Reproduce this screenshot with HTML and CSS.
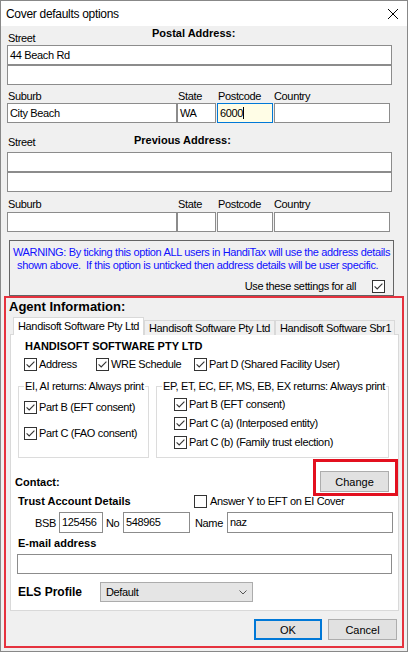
FILE: index.html
```html
<!DOCTYPE html>
<html lang="en">
<head>
    <meta charset="UTF-8">
    <title>Cover defaults options</title>
    <link rel="stylesheet" href="styles.css">
</head>
<body>
    <div class="window">
        <div class="titlebar">
            <span>Cover defaults options</span>
            <svg class="close" width="10" height="10" viewBox="0 0 10 10"><path d="M0 0L10 10M10 0L0 10" stroke="#000" stroke-width="1"/></svg>
        </div>

        <div class="content">
            <!-- Postal address -->
            <div class="addr-head postal">
                <span class="lbl">Street</span>
                <h3>Postal Address:</h3>
            </div>
            <div class="field full">44 Beach Rd</div>
            <div class="field full"></div>
            <div class="addr-grid">
                <span class="lbl">Suburb</span>
                <span class="lbl">State</span>
                <span class="lbl">Postcode</span>
                <span class="lbl country">Country</span>
                <div class="field">City Beach</div>
                <div class="field state">WA</div>
                <div class="field postcode focus">6000<span class="caret"></span></div>
                <div class="field"></div>
            </div>

            <!-- Previous address -->
            <div class="addr-head prev">
                <span class="lbl">Street</span>
                <h3>Previous Address:</h3>
            </div>
            <div class="field full"></div>
            <div class="field full"></div>
            <div class="addr-grid tall">
                <span class="lbl">Suburb</span>
                <span class="lbl">State</span>
                <span class="lbl">Postcode</span>
                <span class="lbl country">Country</span>
                <div class="field"></div>
                <div class="field state"></div>
                <div class="field postcode"></div>
                <div class="field"></div>
            </div>

            <div class="warning">
                <span class="line">WARNING: By ticking this option ALL users in HandiTax will use the address details</span>
                <span class="line second">shown above.&nbsp; If this option is unticked then address details will be user specific.</span>
                <div class="use-all">
                    <span>Use these settings for all</span>
                    <svg class="cb" viewBox="0 0 13 13"><rect x="0.5" y="0.5" width="12" height="12" fill="#fff" stroke="#333"/><path d="M2.6 6.4L5.2 9L10.4 3.6" fill="none" stroke="#333" stroke-width="1.1"/></svg>
                </div>
            </div>
        </div>

        <!-- Agent information -->
        <div class="agent">
            <h2>Agent Information:</h2>
            <div class="tabs">
                <div class="tab active">Handisoft Software Pty Ltd</div>
                <div class="tab">Handisoft Software Pty Ltd</div>
                <div class="tab last">Handisoft Software Sbr1</div>
            </div>
            <div class="panel">
                <div class="company">HANDISOFT SOFTWARE PTY LTD</div>
                <div class="opts">
                    <label class="check"><svg class="cb" viewBox="0 0 13 13"><rect x="0.5" y="0.5" width="12" height="12" fill="#fff" stroke="#333"/><path d="M2.6 6.4L5.2 9L10.4 3.6" fill="none" stroke="#333" stroke-width="1.1"/></svg>Address</label>
                    <label class="check"><svg class="cb" viewBox="0 0 13 13"><rect x="0.5" y="0.5" width="12" height="12" fill="#fff" stroke="#333"/><path d="M2.6 6.4L5.2 9L10.4 3.6" fill="none" stroke="#333" stroke-width="1.1"/></svg>WRE Schedule</label>
                    <label class="check"><svg class="cb" viewBox="0 0 13 13"><rect x="0.5" y="0.5" width="12" height="12" fill="#fff" stroke="#333"/><path d="M2.6 6.4L5.2 9L10.4 3.6" fill="none" stroke="#333" stroke-width="1.1"/></svg>Part D (Shared Facility User)</label>
                </div>

                <div class="groups">
                    <fieldset class="g1">
                        <legend>EI, AI returns: Always print</legend>
                        <label class="check"><svg class="cb" viewBox="0 0 13 13"><rect x="0.5" y="0.5" width="12" height="12" fill="#fff" stroke="#333"/><path d="M2.6 6.4L5.2 9L10.4 3.6" fill="none" stroke="#333" stroke-width="1.1"/></svg>Part B (EFT consent)</label>
                        <label class="check"><svg class="cb" viewBox="0 0 13 13"><rect x="0.5" y="0.5" width="12" height="12" fill="#fff" stroke="#333"/><path d="M2.6 6.4L5.2 9L10.4 3.6" fill="none" stroke="#333" stroke-width="1.1"/></svg>Part C (FAO consent)</label>
                    </fieldset>
                    <fieldset class="g2">
                        <legend>EP, ET, EC, EF, MS, EB, EX returns: Always print</legend>
                        <label class="check"><svg class="cb" viewBox="0 0 13 13"><rect x="0.5" y="0.5" width="12" height="12" fill="#fff" stroke="#333"/><path d="M2.6 6.4L5.2 9L10.4 3.6" fill="none" stroke="#333" stroke-width="1.1"/></svg>Part B (EFT consent)</label>
                        <label class="check"><svg class="cb" viewBox="0 0 13 13"><rect x="0.5" y="0.5" width="12" height="12" fill="#fff" stroke="#333"/><path d="M2.6 6.4L5.2 9L10.4 3.6" fill="none" stroke="#333" stroke-width="1.1"/></svg>Part C (a) (Interposed entity)</label>
                        <label class="check"><svg class="cb" viewBox="0 0 13 13"><rect x="0.5" y="0.5" width="12" height="12" fill="#fff" stroke="#333"/><path d="M2.6 6.4L5.2 9L10.4 3.6" fill="none" stroke="#333" stroke-width="1.1"/></svg>Part C (b) (Family trust election)</label>
                    </fieldset>
                </div>

                <div class="contact-row">
                    <span class="bold">Contact:</span>
                    <span class="hl"><button class="btn change">Change</button></span>
                </div>

                <div class="trust-row">
                    <span class="bold">Trust Account Details</span>
                    <label class="check"><svg class="cb" viewBox="0 0 13 13"><rect x="0.5" y="0.5" width="12" height="12" fill="#fff" stroke="#333"/></svg>Answer Y to EFT on EI Cover</label>
                </div>

                <div class="bsb-row">
                    <span class="lbl-bsb">BSB</span>
                    <div class="field f-bsb">125456</div>
                    <span class="lbl-no">No</span>
                    <div class="field f-no">548965</div>
                    <span class="lbl-name">Name</span>
                    <div class="field f-name">naz</div>
                </div>

                <div class="bold email-label">E-mail address</div>
                <div class="field email"></div>

                <div class="els-row">
                    <span class="bold els">ELS Profile</span>
                    <div class="select">
                        <span>Default</span>
                        <svg width="8" height="5" viewBox="0 0 8 5"><path d="M0.5 0.5L4 4L7.5 0.5" fill="none" stroke="#555" stroke-width="1"/></svg>
                    </div>
                </div>
            </div>

            <div class="actions">
                <button class="btn ok">OK</button>
                <button class="btn cancel">Cancel</button>
            </div>
        </div>
    </div>
</body>
</html>
```

FILE: styles.css
```css
* {
    box-sizing: border-box;
}

body {
    margin: 0;
    font-family: "Liberation Sans", Arial, sans-serif;
    font-size: 11px;
    letter-spacing: -0.35px;
    color: #000;
}

.window {
    width: 408px;
    height: 652px;
    border: 1px solid #888;
    background: #f0f0f0;
    display: flex;
    flex-direction: column;
}

.titlebar {
    height: 25px;
    flex: none;
    background: #fff;
    display: flex;
    align-items: center;
    justify-content: space-between;
    padding: 0 9px 0 5px;
    font-size: 12px;
    letter-spacing: -0.3px;
}

.content {
    padding-left: 6px;
}

/* Address blocks */
.addr-head {
    display: grid;
    height: 19px;
    line-height: 13px;
}

.addr-head.postal {
    grid-template-columns: 145px auto;
}

.addr-head.prev {
    height: 29px;
    grid-template-columns: 127px auto;
}

.addr-head .lbl {
    margin-top: 6px;
    padding-left: 1px;
}

.addr-head.prev .lbl {
    margin-top: 13px;
}

.addr-head h3 {
    margin: 1px 0 0;
    font-size: 11px;
    letter-spacing: 0;
}

.addr-head.prev h3 {
    margin-top: 11px;
}

.field {
    height: 20px;
    border: 1px solid #8c8c8c;
    background: #fff;
    line-height: 18px;
    padding-left: 2px;
    white-space: nowrap;
    overflow: hidden;
}

.field.full {
    width: 385px;
}

.addr-grid {
    display: grid;
    grid-template-columns: 170px 40px 57px 116px;
    grid-template-rows: 18px 20px;
}

.addr-grid.tall {
    grid-template-rows: 20px 20px;
}

.addr-grid .lbl {
    align-self: end;
    line-height: 13px;
    padding-left: 1px;
}

.addr-grid.tall .lbl {
    padding-bottom: 1px;
}

.addr-grid .lbl.country {
    padding-left: 0;
}

.field.state {
    width: 39px;
}

.field.postcode {
    width: 56px;
}

.field.focus {
    border-color: #0078d7;
    background: #fffde6;
}

.caret {
    display: inline-block;
    width: 1px;
    height: 12px;
    background: #000;
    vertical-align: -2px;
}

/* Warning */
.warning {
    margin: 8px 0 0 2px;
    width: 385px;
    height: 56px;
    border: 1px solid #646464;
    padding: 5px 8px 0 3px;
    line-height: 13px;
}

.warning .line {
    display: block;
    color: #1010ff;
    white-space: nowrap;
}

.warning .line.second {
    padding-left: 4px;
}

.use-all {
    display: flex;
    justify-content: flex-end;
    align-items: center;
    gap: 16px;
    margin-top: 8px;
}

.cb {
    width: 13px;
    height: 13px;
    flex: none;
    display: block;
}

/* Agent information */
.agent {
    margin: 0 3px 3px;
    height: 352px;
    border: 2px solid #e5323e;
}

.agent h2 {
    margin: 0 0 0 3px;
    padding-top: 1px;
    font-size: 13px;
    line-height: 16px;
    letter-spacing: 0;
}

.tabs {
    display: flex;
    align-items: flex-end;
    height: 18px;
    margin: 2px 0 0 7px;
}

.tab {
    height: 15px;
    width: 131px;
    border: 1px solid #d9d9d9;
    border-bottom: none;
    background: #f0f0f0;
    padding-left: 4px;
    line-height: 14px;
    white-space: nowrap;
}

.tab.active {
    height: 18px;
    background: #fff;
    line-height: 16px;
    position: relative;
    z-index: 1;
}

.tab.last {
    width: 120px;
}

.panel {
    margin: -1px 0 0 4px;
    width: 389px;
    height: 277px;
    border: 1px solid #d9d9d9;
    background: #fff;
    padding: 4px 0 0 4px;
}

.bold {
    font-weight: bold;
    letter-spacing: 0;
}

.company {
    margin-left: 10px;
    font-weight: bold;
    letter-spacing: 0;
    line-height: 14px;
}

.check {
    display: flex;
    align-items: center;
    gap: 2px;
    line-height: 14px;
    white-space: nowrap;
}

.opts {
    display: grid;
    grid-template-columns: 72px 98px auto;
    margin: 4px 0 0 9px;
}

.groups {
    display: flex;
    gap: 7px;
    margin: 9px 0 0 3px;
}

fieldset {
    margin: 0;
    border: 1px solid #dcdcdc;
    padding: 0 0 17px 5px;
    min-width: 0;
}

legend {
    padding: 0 1px;
    line-height: 13px;
}

.g1 {
    width: 131px;
}

.g1 .check {
    margin-top: 12px;
}

.g1 .check:first-of-type {
    margin-top: 7px;
}

.g2 {
    width: 233px;
    padding-bottom: 8px;
}

.g2 .check {
    margin: 5px 0 0 12px;
}

.g2 .check:first-of-type {
    margin-top: 4px;
}

.btn {
    font-family: inherit;
    font-size: 11px;
    letter-spacing: 0;
    height: 21px;
    background: #e1e1e1;
    border: 1px solid #adadad;
    padding: 0;
    color: #000;
}

.contact-row {
    display: flex;
    justify-content: space-between;
    align-items: center;
    height: 21px;
    margin: 13px 9px 0 0;
}

.hl {
    position: relative;
    display: block;
}

.hl::after {
    content: "";
    position: absolute;
    left: -7px;
    right: -9px;
    top: -12px;
    bottom: -4px;
    border: 3px solid #e3101f;
}

.btn.change {
    width: 69px;
    display: block;
}

.trust-row {
    display: grid;
    grid-template-columns: 176px auto;
    margin: 2px 0 0 3px;
    line-height: 14px;
}

.trust-row .check {
    gap: 3px;
}

.bsb-row {
    display: flex;
    align-items: center;
    height: 21px;
    margin: 4px 0 0 20px;
}

.bsb-row .field {
    height: 21px;
    line-height: 19px;
}

.lbl-bsb {
    width: 24px;
}

.f-bsb {
    width: 44px;
}

.lbl-no {
    width: 20px;
    padding-left: 3px;
}

.f-no {
    width: 67px;
}

.lbl-name {
    width: 37px;
    padding-left: 5px;
}

.f-name {
    width: 166px;
}

.email-label {
    margin: 3px 0 0 3px;
    line-height: 14px;
}

.field.email {
    margin: 4px 0 0 2px;
    width: 375px;
}

.els-row {
    display: grid;
    grid-template-columns: 82px 153px;
    align-items: center;
    margin: 8px 0 0 3px;
}

.els {
    font-size: 12px;
}

.select {
    height: 20px;
    display: flex;
    justify-content: space-between;
    align-items: center;
    background: #e5e5e5;
    border: 1px solid #acacac;
    padding: 0 5px;
}

.actions {
    display: flex;
    justify-content: flex-end;
    gap: 6px;
    margin-top: 8px;
    padding-right: 5px;
}

.btn.ok {
    width: 68px;
    border-color: #0078d7;
    box-shadow: inset 0 0 0 1px #0078d7;
}

.btn.cancel {
    width: 69px;
}
```
